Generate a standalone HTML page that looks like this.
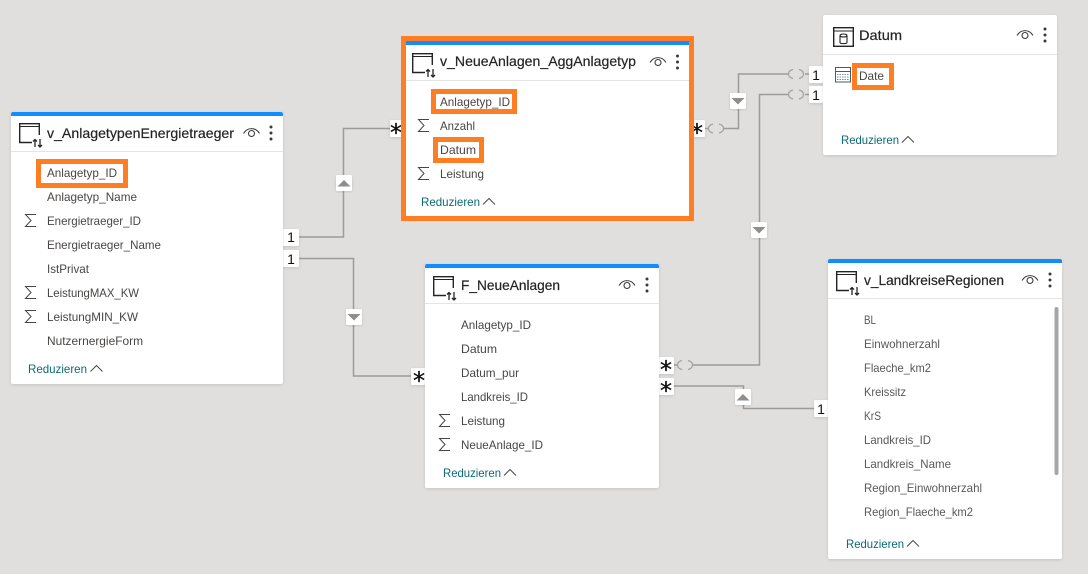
<!DOCTYPE html>
<html><head><meta charset="utf-8"><style>
html,body{margin:0;padding:0;width:1088px;height:574px;overflow:hidden;background:#e1dfdd}
svg{display:block}
text{font-family:"Liberation Sans",sans-serif}
.f{font-size:12px;fill:#484644}
.g{font-size:12px;fill:#5a5856}
.t{font-size:14px;fill:#252423;stroke:#252423;stroke-width:.2}
.r{font-size:12px;fill:#0b6a73}
.b{font-size:14px;fill:#111;text-anchor:middle}
.s{font-family:"DejaVu Sans",sans-serif;font-size:24px;fill:#111;text-anchor:middle;stroke:#111;stroke-width:.3}
.l{fill:none;stroke:#9c9b99;stroke-width:1.5}
</style></head><body>
<svg width="1088" height="574" viewBox="0 0 1088 574" xmlns="http://www.w3.org/2000/svg">
<defs>
<filter id="sh" x="-10%" y="-10%" width="120%" height="120%"><feDropShadow dx="0" dy="1" stdDeviation="1.5" flood-color="#000" flood-opacity=".12"/></filter>
<g id="tbl" fill="none" stroke="#252423" stroke-width="1.4">
<path d="M13 19.500H.7V.7H20.300V12"/><path d="M.7 3.500H20.300" stroke-width="1"/>
<path d="M16 24V16.500M14 18.500l2-2 2 2M21 16v8M19 22l2 2 2-2" stroke-width="1.300"/>
</g>
<g id="eye" fill="none" stroke="#3b3a39" stroke-width="1.100"><path d="M-8 1.500C-4-5 4-5 8 1.500"/><circle cx="0" cy="1.500" r="3"/></g>
<g id="dots" fill="#3b3a39"><circle cx="0" cy="-6" r="1.500"/><circle cx="0" cy="0" r="1.500"/><circle cx="0" cy="6" r="1.500"/></g>
<path id="sig" d="M11 .5H.5L6 6.500.5 12.500H11" fill="none" stroke="#484644" stroke-width="1"/>
<path id="chev" d="M0 6.500L6 .5 12 6.500" fill="none" stroke="#4a4a4a" stroke-width="1"/>
<g id="up"><rect x="-8" y="-8" width="16" height="16" rx="1.500" fill="#fff" filter="url(#sh)"/><path d="M-6.500 3.500L0-3 6.500 3.500Z" fill="#8f8e8c"/></g>
<g id="dn"><rect x="-8" y="-8" width="16" height="16" rx="1.500" fill="#fff" filter="url(#sh)"/><path d="M-6.500-3L0 3.500 6.500-3Z" fill="#8f8e8c"/></g>
<path id="br" d="M6 -4.500C0 -3 0 3 6 4.500M12 -4.500C18 -3 18 3 12 4.500" fill="none" stroke="#a3a2a0" stroke-width="1.200"/>
</defs>

<!-- connector lines -->
<path class="l" d="M298 237H343.500V128.500H392"/>
<path class="l" d="M298 258.500H353.500V376H412"/>
<path class="l" d="M705 128.500H708M724 128.500H738.500V74H788M805 74H809"/>
<path class="l" d="M674 365H677M692 365H759.500V94.500H788M805 94.500H809"/>
<path class="l" d="M674 386H743.500V408.500H815"/>
<use href="#br" x="707" y="128.500"/><use href="#br" x="787" y="74"/><use href="#br" x="787" y="94.500"/><use href="#br" x="676" y="365"/>

<use href="#up" x="344" y="183"/><use href="#dn" x="354" y="317"/><use href="#dn" x="738" y="101"/><use href="#dn" x="759" y="230"/><use href="#up" x="743" y="397"/>

<!-- badges -->
<g fill="#fff" filter="url(#sh)">
<rect x="281" y="229" width="18" height="17" rx="1.500"/><rect x="281" y="250" width="18" height="17" rx="1.500"/>
<rect x="390" y="120" width="14" height="17" rx="1.500"/><rect x="411" y="368" width="16" height="17" rx="1.500"/>
<rect x="692" y="120" width="13" height="17" rx="1.500"/><rect x="809" y="66" width="16" height="17" rx="1.500"/><rect x="809" y="86" width="16" height="17" rx="1.500"/>
<rect x="657" y="357" width="17" height="17" rx="1.500"/><rect x="657" y="378" width="17" height="17" rx="1.500"/><rect x="814" y="400" width="16" height="17" rx="1.500"/>
</g>
<text class="b" x="291" y="242">1</text><text class="b" x="291" y="264">1</text><text class="b" x="816" y="80">1</text><text class="b" x="816" y="100">1</text><text class="b" x="821" y="414">1</text>
<text class="s" x="396" y="141">*</text><text class="s" x="419" y="389">*</text><text class="s" x="697" y="141">*</text><text class="s" x="666" y="378">*</text><text class="s" x="666" y="399">*</text>

<!-- card 1 -->
<rect x="11" y="112" width="272" height="272" rx="2" fill="#fff" filter="url(#sh)"/>
<path d="M11 116V114a2 2 0 0 1 2-2H281a2 2 0 0 1 2 2v2Z" fill="#118dff"/>
<path d="M11 151.500H283" stroke="#e6e5e4"/>
<use href="#tbl" x="19" y="123"/>
<text class="t" x="47" y="138" textLength="187" lengthAdjust="spacingAndGlyphs">v_AnlagetypenEnergietraeger</text>
<use href="#eye" x="251.500" y="132"/><use href="#dots" x="271" y="133"/>
<rect x="38.500" y="161.500" width="87" height="24" fill="none" stroke="#fd7e23" stroke-width="5"/>
<text class="f" x="47" y="177" textLength="70" lengthAdjust="spacingAndGlyphs">Anlagetyp_ID</text>
<text class="f" x="47" y="201" textLength="90" lengthAdjust="spacingAndGlyphs">Anlagetyp_Name</text>
<text class="f" x="47" y="225" textLength="94" lengthAdjust="spacingAndGlyphs">Energietraeger_ID</text>
<text class="f" x="47" y="249" textLength="114" lengthAdjust="spacingAndGlyphs">Energietraeger_Name</text>
<text class="f" x="47" y="273" textLength="42" lengthAdjust="spacingAndGlyphs">IstPrivat</text>
<text class="f" x="47" y="297" textLength="92" lengthAdjust="spacingAndGlyphs">LeistungMAX_KW</text>
<text class="f" x="47" y="321" textLength="91" lengthAdjust="spacingAndGlyphs">LeistungMIN_KW</text>
<text class="f" x="47" y="345" textLength="96" lengthAdjust="spacingAndGlyphs">NutzernergieForm</text>
<use href="#sig" x="25" y="214"/><use href="#sig" x="25" y="286"/><use href="#sig" x="25" y="310"/>
<text class="r" x="28" y="373" textLength="59" lengthAdjust="spacingAndGlyphs">Reduzieren</text><use href="#chev" x="90.500" y="365"/>

<!-- card 2 -->
<rect x="403.500" y="38.500" width="288" height="180" fill="#fff" stroke="#fd7e23" stroke-width="5"/>
<rect x="406" y="41" width="283" height="4" fill="#118dff"/>
<path d="M406 80.500H689" stroke="#e6e5e4"/>
<use href="#tbl" x="412" y="53"/>
<text class="t" x="440" y="66" textLength="196" lengthAdjust="spacingAndGlyphs">v_NeueAnlagen_AggAnlagetyp</text>
<use href="#eye" x="658" y="61"/><use href="#dots" x="677.500" y="62"/>
<rect x="433.500" y="91.500" width="81" height="20" fill="none" stroke="#fd7e23" stroke-width="5"/>
<rect x="435.500" y="139.500" width="46" height="21" fill="none" stroke="#fd7e23" stroke-width="5"/>
<text class="f" x="440" y="106" textLength="70" lengthAdjust="spacingAndGlyphs">Anlagetyp_ID</text>
<text class="f" x="440" y="130" textLength="35" lengthAdjust="spacingAndGlyphs">Anzahl</text>
<text class="f" x="440" y="154" textLength="36" lengthAdjust="spacingAndGlyphs">Datum</text>
<text class="f" x="440" y="178" textLength="44" lengthAdjust="spacingAndGlyphs">Leistung</text>
<use href="#sig" x="418" y="119"/><use href="#sig" x="418" y="167"/>
<text class="r" x="421" y="206" textLength="59" lengthAdjust="spacingAndGlyphs">Reduzieren</text><use href="#chev" x="483" y="198"/>

<!-- Datum card -->
<rect x="823" y="15" width="234" height="140" rx="2" fill="#fff" filter="url(#sh)"/>
<path d="M823 54.500H1057" stroke="#e6e5e4"/>
<g fill="none" stroke="#252423" stroke-width="1.400"><rect x="833.700" y="27.700" width="19.600" height="18.600"/><path d="M833.700 31H853.300" stroke-width="1"/><path d="M840 36v6.500c0 1.500 7 1.500 7 0V36" stroke-width="1.100"/><ellipse cx="843.500" cy="35.500" rx="3.500" ry="1.500" stroke-width="1.100"/></g>
<text class="t" x="859" y="40" textLength="43" lengthAdjust="spacingAndGlyphs">Datum</text>
<use href="#eye" x="1025" y="34"/><use href="#dots" x="1045" y="35"/>
<g fill="none"><rect x="835.500" y="67.500" width="15" height="14.500" stroke="#4c5a68"/><path d="M835.500 71.500H850.500" stroke="#4c5a68"/><path d="M837 74.500h12M837 77h12M837 79.500h12" stroke="#7f8b97" stroke-dasharray="1.500 1"/></g>
<rect x="854.500" y="65.500" width="37" height="22" fill="none" stroke="#fd7e23" stroke-width="5"/>
<text class="f" x="859" y="80" textLength="25" lengthAdjust="spacingAndGlyphs">Date</text>
<text class="r" x="841" y="144" textLength="58" lengthAdjust="spacingAndGlyphs">Reduzieren</text><use href="#chev" x="902" y="136"/>

<!-- F card -->
<rect x="425" y="264" width="234" height="224" rx="2" fill="#fff" filter="url(#sh)"/>
<path d="M425 268V266a2 2 0 0 1 2-2H657a2 2 0 0 1 2 2v2Z" fill="#118dff"/>
<path d="M425 303.500H659" stroke="#e6e5e4"/>
<use href="#tbl" x="433" y="276"/>
<text class="t" x="461" y="290" textLength="99" lengthAdjust="spacingAndGlyphs">F_NeueAnlagen</text>
<use href="#eye" x="627" y="284"/><use href="#dots" x="647" y="285"/>
<text class="f" x="461" y="329" textLength="70" lengthAdjust="spacingAndGlyphs">Anlagetyp_ID</text>
<text class="f" x="461" y="353" textLength="36" lengthAdjust="spacingAndGlyphs">Datum</text>
<text class="f" x="461" y="377" textLength="58" lengthAdjust="spacingAndGlyphs">Datum_pur</text>
<text class="f" x="461" y="401" textLength="67" lengthAdjust="spacingAndGlyphs">Landkreis_ID</text>
<text class="f" x="461" y="425" textLength="44" lengthAdjust="spacingAndGlyphs">Leistung</text>
<text class="f" x="461" y="449" textLength="82" lengthAdjust="spacingAndGlyphs">NeueAnlage_ID</text>
<use href="#sig" x="439" y="414"/><use href="#sig" x="439" y="438"/>
<text class="r" x="443" y="477" textLength="58" lengthAdjust="spacingAndGlyphs">Reduzieren</text><use href="#chev" x="504" y="469"/>

<!-- L card -->
<rect x="828" y="259" width="234" height="300" rx="2" fill="#fff" filter="url(#sh)"/>
<path d="M828 263V261a2 2 0 0 1 2-2H1060a2 2 0 0 1 2 2v2Z" fill="#118dff"/>
<path d="M828 298.500H1062" stroke="#e6e5e4"/>
<use href="#tbl" x="836" y="271"/>
<text class="t" x="864" y="285" textLength="140" lengthAdjust="spacingAndGlyphs">v_LandkreiseRegionen</text>
<use href="#eye" x="1030" y="279"/><use href="#dots" x="1050" y="280"/>
<rect x="1054.500" y="307" width="4" height="168" rx="2" fill="#a6a6a6"/>
<text class="g" x="864" y="324" textLength="12" lengthAdjust="spacingAndGlyphs">BL</text>
<text class="g" x="864" y="348" textLength="76" lengthAdjust="spacingAndGlyphs">Einwohnerzahl</text>
<text class="g" x="864" y="372" textLength="67" lengthAdjust="spacingAndGlyphs">Flaeche_km2</text>
<text class="g" x="864" y="396" textLength="42" lengthAdjust="spacingAndGlyphs">Kreissitz</text>
<text class="g" x="864" y="420" textLength="17" lengthAdjust="spacingAndGlyphs">KrS</text>
<text class="g" x="864" y="444" textLength="67" lengthAdjust="spacingAndGlyphs">Landkreis_ID</text>
<text class="g" x="864" y="468" textLength="87" lengthAdjust="spacingAndGlyphs">Landkreis_Name</text>
<text class="g" x="864" y="492" textLength="118" lengthAdjust="spacingAndGlyphs">Region_Einwohnerzahl</text>
<text class="g" x="864" y="516" textLength="109" lengthAdjust="spacingAndGlyphs">Region_Flaeche_km2</text>
<text class="r" x="846" y="548" textLength="58" lengthAdjust="spacingAndGlyphs">Reduzieren</text><use href="#chev" x="907" y="540"/>
</svg>
</body></html>
